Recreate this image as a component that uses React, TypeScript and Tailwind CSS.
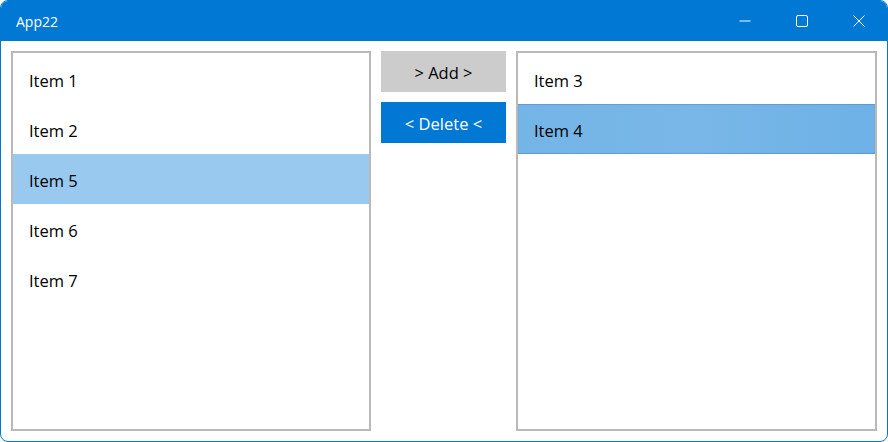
const leftItems = ['Item 1', 'Item 2', 'Item 5', 'Item 6', 'Item 7'];
const rightItems = ['Item 3', 'Item 4'];

function ListBox({ items, selected, accent }: { items: string[]; selected: string; accent: string }) {
  return (
    <div className="h-[380px] border-2 border-[#b9b9b9] bg-white pt-px overflow-hidden">
      {items.map((item) => (
        <div
          key={item}
          className={`h-[50px] flex items-center pl-[16px] pt-[4px] text-[16.5px] text-black ${item === selected ? accent : ''}`}
        >
          {item}
        </div>
      ))}
    </div>
  );
}

export default function App() {
  return (
    <div
      className="w-[888px] h-[442px] bg-white"
      style={{ fontFamily: '"Segoe UI", "Open Sans", "Noto Sans", sans-serif' }}
    >
      <div className="w-full h-full border border-[#0078d4] rounded-lg overflow-hidden flex flex-col bg-white">
        {/* Title bar */}
        <div className="h-[40px] bg-[#0078d4] flex items-center text-white shrink-0">
          <span className="pl-[15px] pt-[1px] text-[14px] flex-1">App22</span>
          <div className="flex h-full">
            <div className="w-[57px] h-full flex items-center justify-center">
              <svg width="12" height="12" viewBox="0 0 12 12">
                <line x1="0.5" y1="6" x2="11.5" y2="6" stroke="white" strokeWidth="1" />
              </svg>
            </div>
            <div className="w-[57px] h-full flex items-center justify-center">
              <svg width="12" height="12" viewBox="0 0 12 12">
                <rect x="0.5" y="0.5" width="11" height="11" rx="1.5" fill="none" stroke="white" strokeWidth="1" />
              </svg>
            </div>
            <div className="w-[57px] h-full flex items-center justify-center">
              <svg width="12" height="12" viewBox="0 0 12 12">
                <path d="M0.5 0.5 L11.5 11.5 M11.5 0.5 L0.5 11.5" stroke="white" strokeWidth="1" />
              </svg>
            </div>
          </div>
        </div>

        {/* Body */}
        <div className="grid grid-cols-[360px_125px_1fr] gap-[10px] p-[10px]">
          <ListBox items={leftItems} selected="Item 5" accent="bg-[#99c9ef]" />
          <div className="flex flex-col gap-[10px]">
            <button className="h-[41px] pt-[3px] bg-[#cccccc] text-black text-[16.5px]">&gt; Add &gt;</button>
            <button className="h-[41px] pt-[3px] bg-[#0078d4] text-white text-[16.5px]">&lt; Delete &lt;</button>
          </div>
          <ListBox
            items={rightItems}
            selected="Item 4"
            accent="bg-gradient-to-r from-[#74b5e7] via-[#78b7e7] to-[#6db1e6] shadow-[inset_0_1px_1px_rgba(40,90,140,0.25),inset_0_-1px_1px_rgba(40,90,140,0.25)]"
          />
        </div>
      </div>
    </div>
  );
}
